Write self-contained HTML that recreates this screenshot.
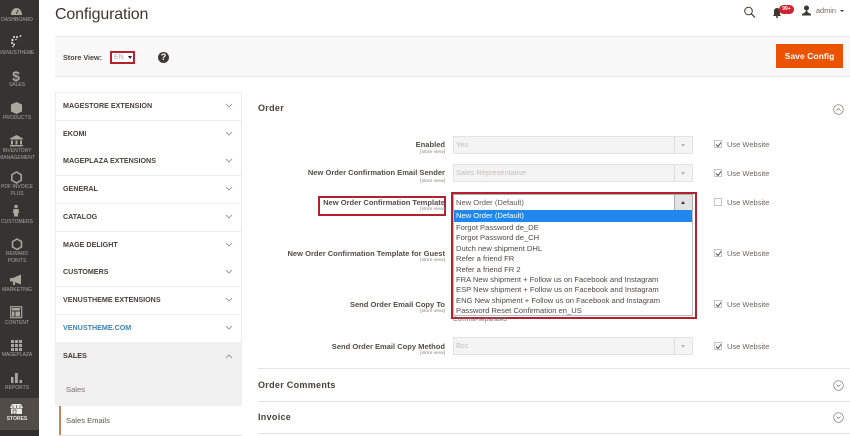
<!DOCTYPE html>
<html><head><meta charset="utf-8">
<style>
*{box-sizing:border-box}
html,body{margin:0;padding:0}
body{width:850px;height:436px;overflow:hidden;background:#fff;position:relative;font-family:"Liberation Sans",sans-serif;color:#41362f}
#w{position:absolute;left:0;top:0;width:850px;height:436px;filter:blur(.3px)}
.a{position:absolute;white-space:nowrap}
#side{position:absolute;left:0;top:0;width:39px;height:436px;background:#373330;overflow:hidden}
.sl{position:absolute;left:-8px;width:50px;text-align:center;font-size:5px;line-height:7px;color:#aaa6a0}
.nav{position:absolute;left:55px;width:187px;height:28px;border:1px solid #eee;border-top:0;background:#fff}
.nav b{position:absolute;left:7px;top:7px;font-size:7.15px;line-height:12px;color:#4a413b;white-space:nowrap}
.nav svg{position:absolute;left:169px;top:10px}
.lab{position:absolute;right:405px;text-align:right;font-size:7.55px;font-weight:bold;line-height:10px;color:#544c47;white-space:nowrap}
.sv{position:absolute;right:405px;font-size:4.9px;line-height:6px;color:#8a8580;white-space:nowrap}
.sel{position:absolute;left:453px;width:240px;height:18px;background:#f4f4f4;border:1px solid #e3e3e3;font-size:7.4px;line-height:16px;padding-left:2px;color:#c3c0bd}
.sel i{position:absolute;right:0;top:0;width:18px;height:16px;border-left:1px solid #ddd}
.sel i:after{content:"";position:absolute;left:6px;top:7px;border:2.5px solid transparent;border-top:3px solid #b8b8b8}
.cb{position:absolute;left:714px;width:8px;height:8px;border:1px solid #c6c6c6;background:#fff}
.cb svg{position:absolute;left:0;top:0}
.uw{position:absolute;left:727px;font-size:7.5px;line-height:10px;color:#6d6762;white-space:nowrap}
.opt{height:10.4px;font-size:7.6px;line-height:11.4px;padding-left:2px;color:#4f4a46;white-space:nowrap}
.sec{position:absolute;left:258px;font-size:9px;font-weight:bold;line-height:12px;color:#4a413b;letter-spacing:.3px}
.hr{position:absolute;left:258px;width:592px;height:1px;background:#e3e3e3}
</style></head><body><div id="w">

<div id="side">
<div style="position:absolute;left:0;top:398px;width:39px;height:32px;background:#514c48"></div>
<div style="position:absolute;left:0;top:430px;width:39px;height:6px;background:#312e2b"></div>
<svg style="position:absolute;left:0;top:0" width="39" height="436" viewBox="0 0 39 436">
<g fill="#aaa6a0">
<path d="M11 15a5.500 7 0 0 1 11 0z"/>
<path d="M16.500 14l1.500-4" stroke="#373330" stroke-width="1"/>
<text x="16" y="81" text-anchor="middle" font-family="Liberation Sans" font-weight="bold" font-size="14">$</text>
<path d="M16.500 102l5.500 2.500v7l-5.500 2.500-5.500-2.500v-7z"/>
<path d="M16.500 135l6.500 3.500v1H10v-1zM11 140.500h2v4h-2zM15.500 140.500h2v4h-2zM20 140.500h2v4h-2zM10 145h13v1.500H10z"/>
<circle cx="16" cy="206.500" r="1.800"/><path d="M13.500 209h5l.7 4h-1.200v3.500h-4v-3.500h-1.200z"/>
<path d="M10 278h3l8-3.500v10l-8-3h-3zM13 282h2v3h-2z"/>
<path d="M12 308h8v2.500h-8zM12 311.500h2.500v5H12zM15.500 311.500h4.500v5h-4.500z"/>
<path d="M11 340h3v3h-3zM15 340h3v3h-3zM19 340h3v3h-3zM11 344h3v3h-3zM15 344h3v3h-3zM19 344h3v3h-3zM11 348h3v3h-3zM15 348h3v3h-3zM19 348h3v3h-3z"/>
<path d="M11 377h2.500v6H11zM15 373h2.800v10H15zM19.500 380h2.500v3h-2.500z"/>
</g>
<g fill="none" stroke="#aaa6a0" stroke-width="1.500">
<path d="M16.500 172l4.700 2.700v5.600l-4.700 2.700-4.700-2.700v-5.600z"/>
<path d="M17 239l4.500 2.600v5.300l-4.500 2.600-4.500-2.600v-5.300z"/>
<path d="M10.700 306.700h11v11h-11z" stroke-width="1.200"/>
</g>
<g fill="#f2efea">
<circle cx="14" cy="37" r="1"/><circle cx="17" cy="37" r="1"/><circle cx="20.500" cy="36" r=".9"/><circle cx="12.500" cy="40" r="1.100"/><circle cx="16" cy="39.500" r=".7"/><circle cx="12" cy="43" r="1"/><circle cx="14" cy="44.500" r="1"/><circle cx="13" cy="46.500" r=".8"/>
</g>
<path d="M12 404h9l2 4H10zM11 408.500h11v5.500H11z" fill="#ece9e5"/>
<path d="M13 405v3M16.500 405v3M20 405v3M13 410h3v4h-3z" stroke="#514c48" stroke-width=".7" fill="none"/>
</svg>
<div class="sl" style="top:17px">DASHBOARD</div>
<div class="sl" style="top:50px">VENUSTHEME</div>
<div class="sl" style="top:82px">SALES</div>
<div class="sl" style="top:115px">PRODUCTS</div>
<div class="sl" style="top:148px">INVENTORY<br>MANAGEMENT</div>
<div class="sl" style="top:184px">PDF INVOICE<br>PLUS</div>
<div class="sl" style="top:219px">CUSTOMERS</div>
<div class="sl" style="top:251px">REWARD<br>POINTS</div>
<div class="sl" style="top:287px">MARKETING</div>
<div class="sl" style="top:320px">CONTENT</div>
<div class="sl" style="top:352px">MAGEPLAZA</div>
<div class="sl" style="top:385px">REPORTS</div>
<div class="sl" style="top:416px;color:#ece9e5;font-weight:bold">STORES</div>
</div>

<div class="a" style="left:55px;top:4px;font:16px/22px 'Liberation Sans',sans-serif;letter-spacing:-.15px;color:#41362f">Configuration</div>

<svg class="a" style="left:743px;top:6px" width="14" height="13" viewBox="0 0 14 13"><circle cx="5.500" cy="5" r="3.800" fill="none" stroke="#41362f" stroke-width="1"/><path d="M8.300 7.800l3.700 3.700" stroke="#41362f" stroke-width="1.200"/></svg>
<svg class="a" style="left:772px;top:7px" width="10" height="11" viewBox="0 0 10 11"><path d="M5 1c2 0 3 1.500 3 3.500v3l1 1.500H1l1-1.500v-3C2 2.500 3 1 5 1z" fill="#41362f"/><circle cx="5" cy="10" r="1" fill="#41362f"/></svg>
<div class="a" style="left:779px;top:5px;width:15px;height:9px;border-radius:4.500px;background:#d3202e;color:#fff;font:bold 5px/9px 'Liberation Sans',sans-serif;text-align:center">99+</div>
<svg class="a" style="left:801px;top:5px" width="11" height="11" viewBox="0 0 11 11"><circle cx="5.500" cy="3" r="2.500" fill="#41362f"/><path d="M5 5.500h1l1 2 3 1.500v1.500H1V9l3-1.500z" fill="#41362f"/></svg>
<div class="a" style="left:816px;top:6px;font:7.300px/10px 'Liberation Sans',sans-serif;color:#6d6762">admin</div>
<div class="a" style="left:840px;top:9.500px;border:2px solid transparent;border-top:2.500px solid #41362f"></div>

<div class="a" style="left:55px;top:36px;width:795px;height:41px;background:#f8f8f8;border-top:1px solid #e8e8e8;border-bottom:1px solid #e8e8e8"></div>
<div class="a" style="left:63px;top:52px;font:bold 7.200px/11px 'Liberation Sans',sans-serif;color:#4d4540">Store View:</div>
<div class="a" style="left:110px;top:51px;width:25px;height:13px;border:2px solid #b5202e;background:#fff"></div>
<div class="a" style="left:114px;top:53px;font:7px/10px 'Liberation Sans',sans-serif;color:#aaa">EN</div>
<div class="a" style="left:128px;top:56px;border:2.500px solid transparent;border-top:3px solid #222"></div>
<div class="a" style="left:158px;top:51.500px;width:11px;height:11px;border-radius:50%;background:#3f3a36;color:#fff;font:bold 9px/11px 'Liberation Sans',sans-serif;text-align:center">?</div>
<div class="a" style="left:776px;top:44px;width:67px;height:24px;background:#eb5202;color:#fff;font:bold 8.600px/24px 'Liberation Sans',sans-serif;text-align:center">Save Config</div>

<div class="a" style="left:55px;top:92px;width:187px;height:1px;background:#eee"></div>
<div class="nav" style="top:93px"><b>MAGESTORE EXTENSION</b><svg width="8" height="6"><path d="M1 1l3 3 3-3" fill="none" stroke="#888" stroke-width=".8"/></svg></div>
<div class="nav" style="top:121px"><b>EKOMI</b><svg width="8" height="6"><path d="M1 1l3 3 3-3" fill="none" stroke="#888" stroke-width=".8"/></svg></div>
<div class="nav" style="top:148px"><b>MAGEPLAZA EXTENSIONS</b><svg width="8" height="6"><path d="M1 1l3 3 3-3" fill="none" stroke="#888" stroke-width=".8"/></svg></div>
<div class="nav" style="top:176px"><b>GENERAL</b><svg width="8" height="6"><path d="M1 1l3 3 3-3" fill="none" stroke="#888" stroke-width=".8"/></svg></div>
<div class="nav" style="top:204px"><b>CATALOG</b><svg width="8" height="6"><path d="M1 1l3 3 3-3" fill="none" stroke="#888" stroke-width=".8"/></svg></div>
<div class="nav" style="top:232px"><b>MAGE DELIGHT</b><svg width="8" height="6"><path d="M1 1l3 3 3-3" fill="none" stroke="#888" stroke-width=".8"/></svg></div>
<div class="nav" style="top:259px"><b>CUSTOMERS</b><svg width="8" height="6"><path d="M1 1l3 3 3-3" fill="none" stroke="#888" stroke-width=".8"/></svg></div>
<div class="nav" style="top:287px"><b>VENUSTHEME EXTENSIONS</b><svg width="8" height="6"><path d="M1 1l3 3 3-3" fill="none" stroke="#888" stroke-width=".8"/></svg></div>
<div class="nav" style="top:315px"><b style="color:#3d85b8">VENUSTHEME.COM</b><svg width="8" height="6"><path d="M1 1l3 3 3-3" fill="none" stroke="#888" stroke-width=".8"/></svg></div>
<div class="a" style="left:55px;top:342px;width:187px;height:64px;background:#f0f0f0"></div>
<div class="a" style="left:63px;top:350px;font:bold 7.150px/12px 'Liberation Sans',sans-serif;color:#41362f">SALES</div>
<svg class="a" style="left:225px;top:353px" width="8" height="6"><path d="M1 5l3-3 3 3" fill="none" stroke="#888" stroke-width=".8"/></svg>
<div class="a" style="left:66px;top:384px;font:7.600px/11px 'Liberation Sans',sans-serif;color:#77716c">Sales</div>
<div class="a" style="left:59px;top:406px;width:183px;height:29px;background:#fff;border-left:2px solid #c9845a"></div>
<div class="a" style="left:66px;top:415px;font:7.600px/11px 'Liberation Sans',sans-serif;color:#5d5751">Sales Emails</div>
<div class="a" style="left:59px;top:435px;width:183px;height:1px;background:#e3e3e3"></div>

<div class="sec" style="top:102px">Order</div>
<svg class="a" style="left:833px;top:104px" width="11" height="11"><circle cx="5.500" cy="5.500" r="4.800" fill="none" stroke="#7a7570" stroke-width=".7"/><path d="M3.500 6.500l2-2 2 2" fill="none" stroke="#7a7570" stroke-width=".7"/></svg>

<div class="lab" style="top:140px">Enabled</div><div class="sv" style="top:150px">[store view]</div>
<div class="sel" style="top:136px">Yes<i></i></div>
<div class="cb" style="top:140px"><svg width="7" height="7"><path d="M1 3.500l2 2 3-4" fill="none" stroke="#514943" stroke-width="1"/></svg></div><div class="uw" style="top:140px">Use Website</div>

<div class="lab" style="top:168px">New Order Confirmation Email Sender</div><div class="sv" style="top:179px">[store view]</div>
<div class="sel" style="top:164px">Sales Representative<i></i></div>
<div class="cb" style="top:169px"><svg width="7" height="7"><path d="M1 3.500l2 2 3-4" fill="none" stroke="#514943" stroke-width="1"/></svg></div><div class="uw" style="top:169px">Use Website</div>

<div class="a" style="left:318px;top:196px;width:128px;height:20px;border:2px solid #b5202e"></div>
<div class="lab" style="top:198px">New Order Confirmation Template</div><div class="sv" style="top:207px">[store view]</div>

<div class="a" style="left:451px;top:192px;width:246px;height:127px;border:2px solid #b5202e;background:#fff"></div>
<div class="a" style="left:453px;top:194px;width:240px;height:17px;background:#fff;border:1px solid #adadad;font:7.600px/15px 'Liberation Sans',sans-serif;color:#5d5751;padding-left:2px">New Order (Default)</div>
<div class="a" style="left:674px;top:194px;width:19px;height:17px;background:#e3e3e3;border:1px solid #adadad"></div>
<div class="a" style="left:681px;top:199px;border:2.500px solid transparent;border-bottom:3px solid #41362f"></div>
<div class="a" style="left:453px;top:210px;width:240px;height:106px;background:#fff;border:1px solid #bdbdbd;border-top:0">
<div class="opt" style="background:#1e88ee;color:#fff;height:12px;line-height:12px">New Order (Default)</div>
<div class="opt">Forgot Password de_DE</div>
<div class="opt">Forgot Password de_CH</div>
<div class="opt">Dutch new shipment DHL</div>
<div class="opt">Refer a friend FR</div>
<div class="opt">Refer a friend FR 2</div>
<div class="opt">FRA New shipment + Follow us on Facebook and Instagram</div>
<div class="opt">ESP New shipment + Follow us on Facebook and Instagram</div>
<div class="opt">ENG New shipment + Follow us on Facebook and Instagram</div>
<div class="opt">Password Reset Confirmation en_US</div>
</div>
<div class="cb" style="top:198px"></div><div class="uw" style="top:198px">Use Website</div>

<div class="lab" style="top:249px">New Order Confirmation Template for Guest</div><div class="sv" style="top:258px">[store view]</div>
<div class="cb" style="top:249px"><svg width="7" height="7"><path d="M1 3.500l2 2 3-4" fill="none" stroke="#514943" stroke-width="1"/></svg></div><div class="uw" style="top:249px">Use Website</div>

<div class="lab" style="top:300px">Send Order Email Copy To</div><div class="sv" style="top:309px">[store view]</div>
<div class="cb" style="top:300px"><svg width="7" height="7"><path d="M1 3.500l2 2 3-4" fill="none" stroke="#514943" stroke-width="1"/></svg></div><div class="uw" style="top:300px">Use Website</div>
<div class="a" style="left:453px;top:315px;font:6.500px/9px 'Liberation Sans',sans-serif;color:#7a7570">Comma-separated</div>

<div class="lab" style="top:342px">Send Order Email Copy Method</div><div class="sv" style="top:351px">[store view]</div>
<div class="sel" style="top:337px">Bcc<i></i></div>
<div class="cb" style="top:342px"><svg width="7" height="7"><path d="M1 3.500l2 2 3-4" fill="none" stroke="#514943" stroke-width="1"/></svg></div><div class="uw" style="top:342px">Use Website</div>

<div class="hr" style="top:368px"></div>
<div class="sec" style="top:379px">Order Comments</div>
<svg class="a" style="left:833px;top:380px" width="11" height="11"><circle cx="5.500" cy="5.500" r="4.800" fill="none" stroke="#7a7570" stroke-width=".7"/><path d="M3.500 4.500l2 2 2-2" fill="none" stroke="#7a7570" stroke-width=".7"/></svg>
<div class="hr" style="top:401px"></div>
<div class="sec" style="top:411px">Invoice</div>
<svg class="a" style="left:833px;top:412px" width="11" height="11"><circle cx="5.500" cy="5.500" r="4.800" fill="none" stroke="#7a7570" stroke-width=".7"/><path d="M3.500 4.500l2 2 2-2" fill="none" stroke="#7a7570" stroke-width=".7"/></svg>
<div class="hr" style="top:433px"></div>
</div></body></html>
